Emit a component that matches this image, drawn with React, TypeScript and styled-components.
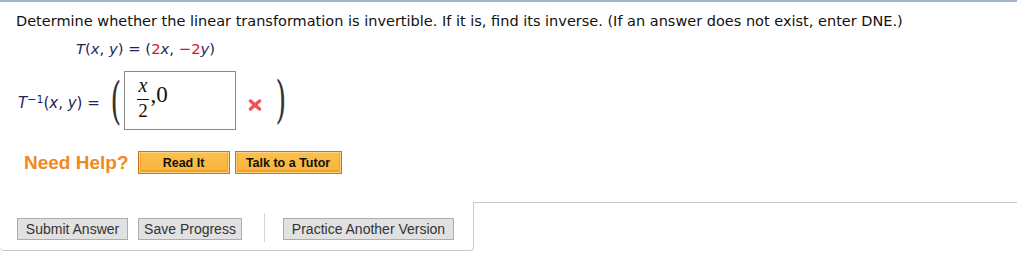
import styled, { createGlobalStyle } from "styled-components";

const GlobalStyle = createGlobalStyle`
  html, body {
    margin: 0;
    padding: 0;
    background: #ffffff;
  }
  body {
    font-family: "DejaVu Sans", Verdana, sans-serif;
  }
`;

const Page = styled.div`
  width: 1017px;
  height: 257px;
  overflow: hidden;
  border-top: 2px solid #a2b5ce;
  box-sizing: border-box;
`;

const Question = styled.div`
  padding: 11px 0 0 16px;
  font-size: 14.5px;
  line-height: 16px;
  color: #111;
`;

const MathLine = styled.div`
  margin: 12px 0 0 76px;
  font-size: 14.8px;
  line-height: 16px;
  color: #1d2656;
`;

const Var = styled.i`
  font-style: italic;
`;

const Red = styled.span`
  color: #e0141e;
`;

const AnswerRow = styled.div`
  display: flex;
  align-items: center;
  height: 59px;
  margin-top: 14px;
  padding-left: 18px;
`;

const Label = styled.span`
  font-size: 15px;
  color: #1d2656;
  margin-top: 5px;
  width: 92px;
  white-space: nowrap;
`;

const Sup = styled.sup`
  font-size: 11px;
  vertical-align: 5px;
  line-height: 0;
`;

const Paren = styled.span<{ $right?: boolean }>`
  font-family: "DejaVu Serif", "Liberation Serif", serif;
  font-weight: 200;
  font-size: 50px;
  line-height: 50px;
  color: #333;
  transform: scaleX(0.55);
  display: inline-block;
  margin-left: ${(p) => (p.$right ? "9px" : "-4px")};
  margin-top: ${(p) => (p.$right ? "-2px" : "0")};
`;

const AnswerBox = styled.div`
  width: 98px;
  height: 57px;
  border: 1px solid #8a8a8a;
  margin-left: -2px;
  display: flex;
  align-items: center;
  padding-left: 12px;
  box-sizing: content-box;
  font-family: "Liberation Serif", "Times New Roman", serif;
  color: #111;
`;

const Fraction = styled.span`
  display: inline-flex;
  flex-direction: column;
  align-items: center;
  font-size: 20px;
  line-height: 18px;
  margin: 0 1px 6px 0;
`;

const Num = styled.span`
  font-style: italic;
  padding: 0 2px 5px;
  border-bottom: 1px solid #111;
`;

const Den = styled.span`
  font-size: 19px;
  padding-top: 2px;
`;

const Tail = styled.span`
  font-size: 23px;
  margin-top: -12px;
`;

const Cross = styled.svg`
  margin: 8px 0 0 12px;
`;

const HelpRow = styled.div`
  display: flex;
  align-items: center;
  margin-top: 21px;
  padding-left: 24px;
  height: 23px;
`;

const HelpText = styled.span`
  font-family: "Liberation Sans", Arial, sans-serif;
  font-weight: bold;
  font-size: 19px;
  color: #f08a1e;
  margin-right: 9px;
`;

const HelpButton = styled.button<{ $w: number }>`
  width: ${(p) => p.$w}px;
  height: 23px;
  margin-right: 5px;
  padding: 0;
  border: 1px solid #c97417;
  background: linear-gradient(#fcc04e, #f9b33b);
  box-shadow: inset 0 0 0 1px #fdd487, inset 0 -1px 0 2px #f0a22e;
  font-family: "Liberation Sans", Arial, sans-serif;
  font-weight: bold;
  font-size: 12.5px;
  color: #111;
`;

const Footer = styled.div`
  display: flex;
  margin-top: 28px;
`;

const ActionBar = styled.div`
  width: 474px;
  height: 49px;
  display: flex;
  align-items: flex-start;
  padding: 16px 0 0 17px;
  box-sizing: border-box;
  border-right: 1px solid #c9c9c9;
  border-bottom: 1px solid #c9c9c9;
  border-bottom-right-radius: 4px;
  border-bottom-left-radius: 4px;
`;

const ActionButton = styled.button<{ $w: number }>`
  width: ${(p) => p.$w}px;
  height: 22px;
  padding: 0;
  margin-right: 10px;
  border: 1px solid #adadad;
  background: #e1e1e1;
  font-family: "Liberation Sans", Arial, sans-serif;
  font-size: 14px;
  color: #333;
`;

const Divider = styled.span`
  width: 1px;
  height: 29px;
  margin: -5px 18px 0 12px;
  background: #d4d4d4;
`;

const Rest = styled.div`
  flex: 1;
  border-top: 1px solid #c9c9c9;
`;

export default function App() {
  return (
    <Page>
      <GlobalStyle />
      <Question>
        Determine whether the linear transformation is invertible. If it is,
        find its inverse. (If an answer does not exist, enter DNE.)
      </Question>
      <MathLine>
        <Var>T</Var>(<Var>x</Var>, <Var>y</Var>) = (<Red>2</Red>
        <Var>x</Var>, <Red>−2</Red>
        <Var>y</Var>)
      </MathLine>
      <AnswerRow>
        <Label>
          <Var>T</Var>
          <Sup>−1</Sup>(<Var>x</Var>, <Var>y</Var>) =
        </Label>
        <Paren>(</Paren>
        <AnswerBox>
          <Fraction>
            <Num>x</Num>
            <Den>2</Den>
          </Fraction>
          <Tail>,0</Tail>
        </AnswerBox>
        <Cross width="14" height="12" viewBox="0 0 14 12">
          <path
            d="M2.5 2 L11.5 10 M11.5 2 L2.5 10"
            stroke="#f1525c"
            strokeWidth="3.4"
            strokeLinecap="round"
          />
        </Cross>
        <Paren $right>)</Paren>
      </AnswerRow>
      <HelpRow>
        <HelpText>Need Help?</HelpText>
        <HelpButton $w={92}>Read It</HelpButton>
        <HelpButton $w={107}>Talk to a Tutor</HelpButton>
      </HelpRow>
      <Footer>
        <ActionBar>
          <ActionButton $w={111}>Submit Answer</ActionButton>
          <ActionButton $w={104}>Save Progress</ActionButton>
          <Divider />
          <ActionButton $w={171}>Practice Another Version</ActionButton>
        </ActionBar>
        <Rest />
      </Footer>
    </Page>
  );
}
